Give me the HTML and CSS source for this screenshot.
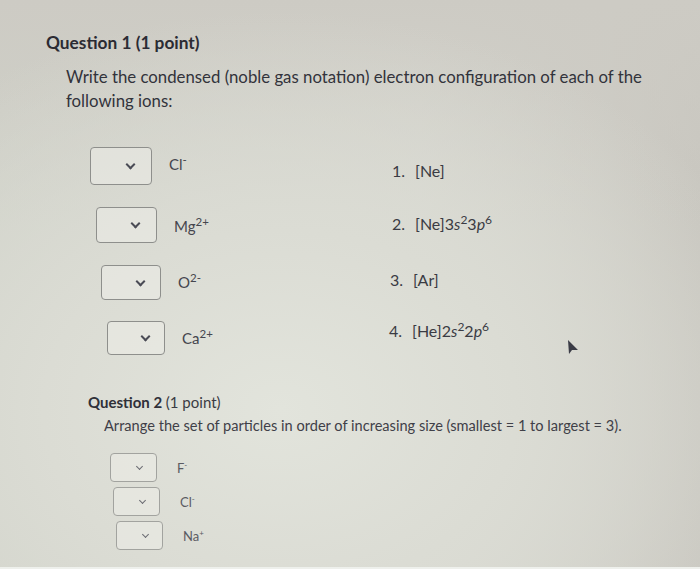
FILE: index.html
```html
<!DOCTYPE html>
<html>
<head>
<meta charset="utf-8">
<link rel="stylesheet" href="styles.css">
</head>
<body>
<div class="page">
  <h2 class="q1-title"><span class="strong">Question 1</span> (1 point)</h2>
  <p class="q1-text">Write the condensed (noble gas notation) electron configuration of each of the following ions:</p>

  <div class="match">
    <div class="left">
      <div class="row r1"><div class="sel"><span class="chev"></span></div><span class="ion">Cl<sup>-</sup></span></div>
      <div class="row r2"><div class="sel"><span class="chev"></span></div><span class="ion">Mg<sup>2+</sup></span></div>
      <div class="row r3"><div class="sel"><span class="chev"></span></div><span class="ion">O<sup>2-</sup></span></div>
      <div class="row r4"><div class="sel"><span class="chev"></span></div><span class="ion">Ca<sup>2+</sup></span></div>
    </div>
    <ol class="answers">
      <li class="a1">[Ne]</li>
      <li class="a2">[Ne]3<i>s</i><sup>2</sup>3<i>p</i><sup>6</sup></li>
      <li class="a3">[Ar]</li>
      <li class="a4">[He]2<i>s</i><sup>2</sup>2<i>p</i><sup>6</sup></li>
    </ol>
  </div>

  <h3 class="q2-title"><span class="strong">Question 2</span> <span class="pts">(1 point)</span></h3>
  <p class="q2-text">Arrange the set of particles in order of increasing size (smallest = 1 to largest = 3).</p>
  <div class="order">
    <div class="orow o1"><div class="sel small"><span class="chev"></span></div><span class="ion2">F<sup>-</sup></span></div>
    <div class="orow o2"><div class="sel small"><span class="chev"></span></div><span class="ion2">Cl<sup>-</sup></span></div>
    <div class="orow o3"><div class="sel small"><span class="chev"></span></div><span class="ion2">Na<sup>+</sup></span></div>
  </div>
  <div class="cursor">
    <svg width="14" height="18" viewBox="0 0 14 18"><path d="M2 1 L3 15 L6 11 L12 11 Z" fill="#2a2c38"/></svg>
  </div>
</div>
</body>
</html>
```

FILE: styles.css
```css
html, body {
  margin: 0;
  padding: 0;
}
body {
  width: 700px;
  height: 569px;
  overflow: hidden;
  font-family: Lato, "Open Sans", sans-serif;
  color: #3b3c44;
  background:
    radial-gradient(ellipse 75% 70% at 40% 72%, #e2e4dc 0%, #dbdcd4 45%, rgba(205,203,196,0) 100%),
    linear-gradient(180deg, #cdcbc4 0%, rgba(214,214,206,0) 40%),
    linear-gradient(90deg, #cfd1c8 0%, #d6d6cf 60%, #c8c6bf 100%);
  background-color: #d2d1ca;
  position: relative;
}
.page {
  padding-top: 31px;
  border-bottom: 2px solid #eef0ec;
  height: 536px;
}
.q1-title {
  margin: 0 0 0 46px;
  font-size: 17.3px;
  font-weight: 700;
  color: #2b2b33;
  line-height: 24px;
}
.q1-text {
  margin: 10px 0 0 66px;
  width: 600px;
  font-size: 16.8px;
  line-height: 24px;
  font-weight: 400;
  color: #32333b;
}
.match {
  display: flex;
  margin-top: 34px;
}
.left {
  display: flex;
  flex-direction: column;
  width: 380px;
}
.row {
  display: flex;
  align-items: flex-start;
}
.sel {
  box-sizing: border-box;
  border: 1.5px solid #8e8f8c;
  border-radius: 4px;
  background: rgba(236,237,232,0.55);
  display: flex;
  align-items: center;
  justify-content: flex-end;
  flex-shrink: 0;
}
.chev {
  width: 5px;
  height: 5px;
  border-right: 2px solid #4a4b55;
  border-bottom: 2px solid #4a4b55;
  transform: rotate(45deg);
  margin-top: -3px;
}
.r1 { margin-left: 90px; }
.r1 .sel { width: 62px; height: 38px; padding-right: 17px; }
.r2 { margin-left: 96px; margin-top: 22px; }
.r2 .sel { width: 61px; height: 36px; padding-right: 17px; }
.r3 { margin-left: 101px; margin-top: 22px; }
.r3 .sel { width: 60px; height: 35px; padding-right: 16px; }
.r4 { margin-left: 107px; margin-top: 21px; }
.r4 .sel { width: 58px; height: 34px; padding-right: 15px; }
.ion {
  font-size: 15px;
  color: #45464e;
  margin-left: 17px;
  margin-top: 8px;
  line-height: 18px;
}
.ion sup { font-size: 11.5px; vertical-align: 6px; line-height: 0; }
.r2 .ion { margin-top: 10px; }
.answers {
  list-style: none;
  margin: 0;
  padding: 0;
  font-size: 16px;
  color: #3a3b43;
}
.answers li { line-height: 18px; }
.answers li::before { display: inline-block; width: 23px; font-weight: 400; }
.a1 { margin: 15px 0 0 12px; }
.a1::before { content: "1."; }
.a2 { margin: 35px 0 0 12px; }
.a2::before { content: "2."; }
.a3 { margin: 38px 0 0 10px; }
.a3::before { content: "3."; }
.a4 { margin: 33px 0 0 9px; }
.a4::before { content: "4."; }
.answers sup { font-size: 12px; vertical-align: 6px; line-height: 0; }
.answers i { font-style: italic; }
.q2-title {
  margin: 37px 0 0 88px;
  font-size: 15px;
  font-weight: 700;
  color: #2f3038;
  line-height: 20px;
}
.q2-title .pts { font-weight: 400; color: #3a3b43; }
.q2-text {
  margin: 4px 0 0 104px;
  font-size: 14.6px;
  line-height: 20px;
  color: #3f4048;
}
.order {
  margin-top: 17px;
  display: flex;
  flex-direction: column;
  gap: 5px;
}
.orow { display: flex; align-items: center; }
.sel.small { width: 47px; height: 29px; padding-right: 14px; border-color: #a2a39f; }
.sel.small .chev { width: 4px; height: 4px; border-color: #6a6b72; border-width: 1.5px; }
.o1 { margin-left: 110px; }
.o2 { margin-left: 113px; }
.o3 { margin-left: 116px; }
.ion2 {
  font-size: 13px;
  color: #5a5b62;
  margin-left: 20px;
  margin-top: 0px;
}
.ion2 sup { font-size: 8px; vertical-align: 5px; line-height: 0; }
.cursor {
  position: absolute;
  left: 566px;
  top: 339px;
  opacity: 0.9;
}
```
